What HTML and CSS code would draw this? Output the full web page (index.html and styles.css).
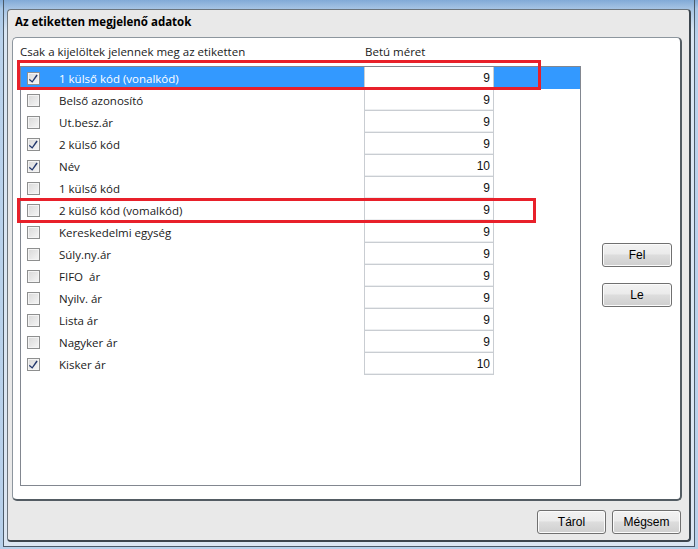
FILE: index.html
```html
<!DOCTYPE html>
<html>
<head>
<meta charset="utf-8">
<link rel="stylesheet" href="styles.css">
</head>
<body>
<div class="frame">
  <div class="window">
    <div class="title">Az etiketten megjelenő adatok</div>
    <div class="panel">
      <div class="main">
        <div class="header"><span class="h1">Csak a kijelöltek jelennek meg az etiketten</span><span class="h2">Betú méret</span></div>
        <div class="list">
          <div class="row sel"><div class="c1"><span class="cb on"><svg viewBox="0 0 11 11"><polygon points="1.6,5.8 4.1,7.9 8.4,1.6 9.7,2.6 4.3,9.8 1,6.9"/></svg></span><span class="txt">1 külső kód (vonalkód)</span></div><div class="c2">9</div></div>
          <div class="row"><div class="c1"><span class="cb"></span><span class="txt">Belső azonosító</span></div><div class="c2">9</div></div>
          <div class="row"><div class="c1"><span class="cb"></span><span class="txt">Ut.besz.ár</span></div><div class="c2">9</div></div>
          <div class="row"><div class="c1"><span class="cb on"><svg viewBox="0 0 11 11"><polygon points="1.6,5.8 4.1,7.9 8.4,1.6 9.7,2.6 4.3,9.8 1,6.9"/></svg></span><span class="txt">2 külső kód</span></div><div class="c2">9</div></div>
          <div class="row"><div class="c1"><span class="cb on"><svg viewBox="0 0 11 11"><polygon points="1.6,5.8 4.1,7.9 8.4,1.6 9.7,2.6 4.3,9.8 1,6.9"/></svg></span><span class="txt">Név</span></div><div class="c2">10</div></div>
          <div class="row"><div class="c1"><span class="cb"></span><span class="txt">1 külső kód</span></div><div class="c2">9</div></div>
          <div class="row"><div class="c1"><span class="cb"></span><span class="txt">2 külső kód (vomalkód)</span></div><div class="c2">9</div></div>
          <div class="row"><div class="c1"><span class="cb"></span><span class="txt">Kereskedelmi egység</span></div><div class="c2">9</div></div>
          <div class="row"><div class="c1"><span class="cb"></span><span class="txt">Súly.ny.ár</span></div><div class="c2">9</div></div>
          <div class="row"><div class="c1"><span class="cb"></span><span class="txt">FIFO&nbsp; ár</span></div><div class="c2">9</div></div>
          <div class="row"><div class="c1"><span class="cb"></span><span class="txt">Nyilv. ár</span></div><div class="c2">9</div></div>
          <div class="row"><div class="c1"><span class="cb"></span><span class="txt">Lista ár</span></div><div class="c2">9</div></div>
          <div class="row"><div class="c1"><span class="cb"></span><span class="txt">Nagyker ár</span></div><div class="c2">9</div></div>
          <div class="row"><div class="c1"><span class="cb on"><svg viewBox="0 0 11 11"><polygon points="1.6,5.8 4.1,7.9 8.4,1.6 9.7,2.6 4.3,9.8 1,6.9"/></svg></span><span class="txt">Kisker ár</span></div><div class="c2">10</div></div>
        </div>
      </div>
      <div class="side">
        <button class="btn side-btn">Fel</button>
        <button class="btn side-btn">Le</button>
      </div>
    </div>
    <div class="footer">
      <button class="btn foot-btn">Tárol</button>
      <button class="btn foot-btn">Mégsem</button>
    </div>
  </div>
</div>
<div class="mark mark1"></div>
<div class="mark mark2"></div>
</body>
</html>
```
FILE: styles.css
```css
html, body {
  margin: 0;
  padding: 0;
}
body {
  width: 698px;
  height: 549px;
  overflow: hidden;
  position: relative;
  background: linear-gradient(180deg, #7fa9d6 0px, #a9c8e8 9px, #b9d2ec 40px, #b7d0ea 100%);
  font-family: "Open Sans", "Noto Sans", sans-serif;
  font-size: 11.5px;
  color: #1a1a1a;
}
.frame {
  box-sizing: border-box;
  margin-left: 3px;
  width: 692px;
  height: 547px;
  padding: 9px 3px 4px 3px;
  border: 1px solid #4b5a68;
  border-top: none;
  background: linear-gradient(180deg, rgba(130,170,215,0.6) 0px, rgba(225,235,245,0.8) 30px, #dbe6f2 100%);
}
.window {
  box-sizing: border-box;
  width: 684px;
  height: 533px;
  border-top: 1px solid #6b747c;
  border-left: 1px solid #6b747c;
  border-right: 2px solid #3c454d;
  border-bottom: 2px solid #3c454d;
  border-radius: 4px;
  background: #e9e9e9;
  display: flex;
  flex-direction: column;
}
.title {
  padding: 4px 0 7px 7px;
  line-height: 16px;
  font-weight: bold;
  color: #000;
}
.panel {
  box-sizing: border-box;
  margin: 0 7px 0 4px;
  height: 464px;
  border-top: 1px solid #8d969e;
  border-left: 1px solid #8d969e;
  border-right: 2px solid #535c63;
  border-bottom: 2px solid #535c63;
  border-radius: 5px;
  background: #fff;
  display: flex;
}
.main {
  padding-left: 7px;
  width: 561px;
}
.header {
  display: flex;
  padding-top: 6px;
  height: 22px;
  line-height: 16px;
}
.h1 {
  width: 345px;
}
.list {
  box-sizing: border-box;
  width: 561px;
  height: 420px;
  border: 1px solid #828790;
}
.row {
  display: flex;
  height: 22px;
}
.row.sel {
  background: #3399ff;
  color: #fff;
}
.c1 {
  width: 343px;
  display: flex;
  align-items: center;
}
.cb {
  box-sizing: border-box;
  width: 13px;
  height: 13px;
  margin-left: 6px;
  margin-top: 1px;
  border: 1px solid #8e8f8f;
  background: linear-gradient(135deg, #d8d8d8, #f6f6f6);
  box-shadow: inset 0 0 0 1px #f4f4f4;
  display: flex;
  align-items: center;
  justify-content: center;
}
.cb svg {
  width: 11px;
  height: 11px;
  fill: #22376c;
}
.txt {
  margin-left: 19px;
  padding-top: 1px;
  line-height: 16px;
}
.c2 {
  box-sizing: border-box;
  width: 130px;
  height: 22px;
  background: #fff;
  border-left: 1px solid #c9cdd2;
  border-right: 1px solid #c9cdd2;
  border-bottom: 1px solid #c9cdd2;
  box-shadow: inset 0 -1px 0 #eceef0;
  color: #111;
  font-family: "Liberation Sans", Arial, sans-serif;
  font-size: 12px;
  text-align: right;
  padding-right: 3px;
  line-height: 22px;
}
.side {
  margin-left: 21px;
  padding-top: 205px;
  display: flex;
  flex-direction: column;
  gap: 16px;
}
.btn {
  box-sizing: border-box;
  height: 24px;
  padding: 0;
  border: 1px solid #707070;
  border-radius: 3px;
  background: linear-gradient(180deg, #f2f2f2 0%, #ebebeb 45%, #dddddd 50%, #cfcfcf 100%);
  box-shadow: inset 0 0 0 1px #fbfbfb;
  font-family: "Liberation Sans", Arial, sans-serif;
  font-size: 12px;
  color: #000;
}
.side-btn {
  width: 70px;
}
.footer {
  display: flex;
  justify-content: flex-end;
  gap: 6px;
  padding: 9px 8px 0 0;
}
.foot-btn {
  width: 69px;
}
.mark {
  position: absolute;
  box-sizing: border-box;
  border: 3px solid #e8202a;
}
.mark1 {
  left: 17px;
  top: 60px;
  width: 524px;
  height: 30px;
}
.mark2 {
  left: 17px;
  top: 198px;
  width: 519px;
  height: 25px;
}
```
